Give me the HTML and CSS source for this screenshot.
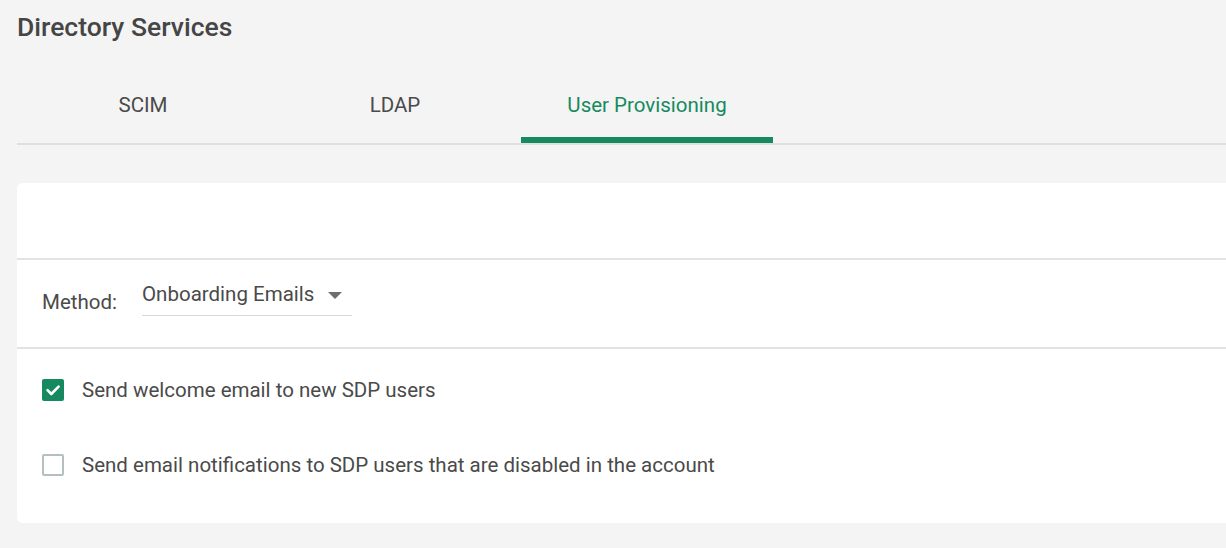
FILE: index.html
```html
<!DOCTYPE html>
<html>
<head>
<meta charset="utf-8">
<link rel="stylesheet" href="styles.css">
</head>
<body>
<div class="page">
  <h1 class="title">Directory Services</h1>
  <div class="tabs">
    <div class="tab">SCIM</div>
    <div class="tab">LDAP</div>
    <div class="tab active">User Provisioning</div>
  </div>
  <div class="cards">
    <div class="card card-empty"></div>
    <div class="card card-method">
      <span class="label">Method:</span>
      <div class="select">
        <span class="select-value">Onboarding Emails</span>
        <span class="arrow"></span>
      </div>
    </div>
    <div class="card card-options">
      <label class="option">
        <span class="box checked">
          <svg viewBox="0 0 22 22" width="22" height="22"><path d="M5.5 11.2 L9.3 15 L16.6 7.6" fill="none" stroke="#fff" stroke-width="2.6" stroke-linecap="round" stroke-linejoin="round"/></svg>
        </span>
        <span class="option-text">Send welcome email to new SDP users</span>
      </label>
      <label class="option">
        <span class="box"></span>
        <span class="option-text">Send email notifications to SDP users that are disabled in the account</span>
      </label>
    </div>
  </div>
</div>
</body>
</html>
```

FILE: styles.css
```css
html, body {
  margin: 0;
  padding: 0;
  background: #f4f4f4;
  font-family: Roboto, "Liberation Sans", sans-serif;
  color: #4a4a4a;
}
.page {
  padding: 0 0 0 17px;
  height: 548px;
  box-sizing: border-box;
}
.title {
  margin: 0;
  padding-top: 11px;
  font-size: 26.5px;
  line-height: 32px;
  font-weight: 500;
  color: #454545;
}
.tabs {
  display: flex;
  margin-top: 37px;
  border-bottom: 2px solid #e0e0e0;
  height: 63px;
}
.tab {
  width: 252px;
  text-align: center;
  font-size: 20.5px;
  line-height: 24px;
  padding-top: 13px;
  color: #4a4a4a;
  box-sizing: border-box;
}
.tab.active {
  color: #168a5e;
  border-bottom: 6px solid #168a5e;
}
.cards {
  margin-top: 38px;
  display: flex;
  flex-direction: column;
  gap: 2px;
  background: #e3e3e3;
  border-radius: 5px 0 0 5px;
  overflow: hidden;
}
.card {
  background: #fff;
}
.card-empty {
  height: 75px;
}
.card-method {
  height: 87px;
  display: flex;
  align-items: flex-start;
  padding-left: 25px;
  box-sizing: border-box;
}
.label {
  font-size: 20.5px;
  line-height: 24px;
  margin-top: 30px;
  width: 100px;
}
.select {
  display: flex;
  align-items: center;
  margin-top: 19px;
  width: 210px;
  height: 37px;
  border-bottom: 1px solid #d8d8d8;
  box-sizing: border-box;
  padding-bottom: 6px;
}
.select-value {
  font-size: 20.5px;
  line-height: 24px;
  color: #4a4a4a;
}
.arrow {
  margin-left: 14px;
  margin-top: 2px;
  width: 0;
  height: 0;
  border-left: 7px solid transparent;
  border-right: 7px solid transparent;
  border-top: 7px solid #6e6e6e;
}
.card-options {
  height: 174px;
  padding: 30px 0 0 25px;
  box-sizing: border-box;
  display: flex;
  flex-direction: column;
  gap: 53px;
}
.option {
  display: flex;
  align-items: center;
  height: 22px;
}
.box {
  width: 22px;
  height: 22px;
  box-sizing: border-box;
  border: 2px solid #b4c0c0;
  border-radius: 2px;
  margin-right: 18px;
  display: flex;
}
.box.checked {
  background: #168a5e;
  border: none;
}
.option-text {
  font-size: 20.5px;
  line-height: 24px;
  color: #4a4a4a;
}
```
